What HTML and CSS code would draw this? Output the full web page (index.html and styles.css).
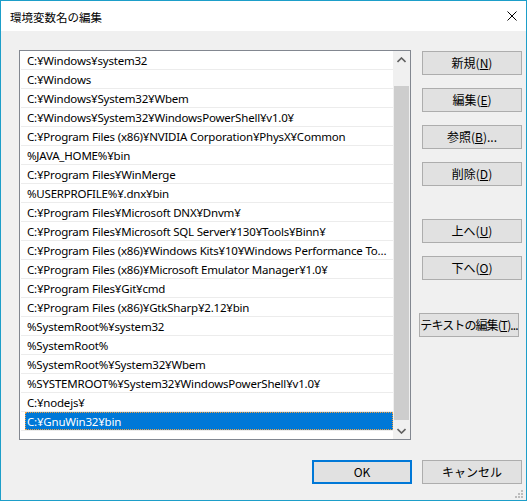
FILE: index.html
```html
<!DOCTYPE html>
<html>
<head>
  <meta charset="utf-8">
  <title>環境変数名の編集</title>
  <link rel="stylesheet" href="styles.css">
</head>
<body>
  <div class="window">
    <div class="titlebar">
      <span class="title">環境変数名の編集</span>
      <svg class="close" width="10" height="10" viewBox="0 0 10 10">
        <path d="M0.5 0.5 L9.5 9.5 M9.5 0.5 L0.5 9.5" stroke="#000" stroke-width="1" fill="none"/>
      </svg>
    </div>

    <div class="content">
      <div class="main">
        <div class="listbox">
          <div class="rows">
            <div class="row"><div class="cell">C:¥Windows¥system32</div></div>
            <div class="row"><div class="cell">C:¥Windows</div></div>
            <div class="row"><div class="cell">C:¥Windows¥System32¥Wbem</div></div>
            <div class="row"><div class="cell">C:¥Windows¥System32¥WindowsPowerShell¥v1.0¥</div></div>
            <div class="row"><div class="cell">C:¥Program Files (x86)¥NVIDIA Corporation¥PhysX¥Common</div></div>
            <div class="row"><div class="cell">%JAVA_HOME%¥bin</div></div>
            <div class="row"><div class="cell">C:¥Program Files¥WinMerge</div></div>
            <div class="row"><div class="cell">%USERPROFILE%¥.dnx¥bin</div></div>
            <div class="row"><div class="cell">C:¥Program Files¥Microsoft DNX¥Dnvm¥</div></div>
            <div class="row"><div class="cell">C:¥Program Files¥Microsoft SQL Server¥130¥Tools¥Binn¥</div></div>
            <div class="row"><div class="cell">C:¥Program Files (x86)¥Windows Kits¥10¥Windows Performance Toolkit¥</div></div>
            <div class="row"><div class="cell">C:¥Program Files (x86)¥Microsoft Emulator Manager¥1.0¥</div></div>
            <div class="row"><div class="cell">C:¥Program Files¥Git¥cmd</div></div>
            <div class="row"><div class="cell">C:¥Program Files (x86)¥GtkSharp¥2.12¥bin</div></div>
            <div class="row"><div class="cell">%SystemRoot%¥system32</div></div>
            <div class="row"><div class="cell">%SystemRoot%</div></div>
            <div class="row"><div class="cell">%SystemRoot%¥System32¥Wbem</div></div>
            <div class="row"><div class="cell">%SYSTEMROOT%¥System32¥WindowsPowerShell¥v1.0¥</div></div>
            <div class="row"><div class="cell">C:¥nodejs¥</div></div>
            <div class="row selected"><div class="cell">C:¥GnuWin32¥bin</div></div>
          </div>
          <div class="scrollbar">
            <div class="arrow">
              <svg width="9" height="6" viewBox="0 0 9 6"><path d="M0.5 5 L4.5 1 L8.5 5" stroke="#606060" stroke-width="1.6" fill="none"/></svg>
            </div>
            <div class="track"><div class="thumb"></div></div>
            <div class="arrow">
              <svg width="9" height="6" viewBox="0 0 9 6"><path d="M0.5 1 L4.5 5 L8.5 1" stroke="#606060" stroke-width="1.6" fill="none"/></svg>
            </div>
          </div>
        </div>

        <div class="side">
          <button class="btn">新規(<u>N</u>)</button>
          <button class="btn">編集(<u>E</u>)</button>
          <button class="btn">参照(<u>B</u>)...</button>
          <button class="btn">削除(<u>D</u>)</button>
          <button class="btn group">上へ(<u>U</u>)</button>
          <button class="btn">下へ(<u>O</u>)</button>
          <button class="btn group shift">テキストの編集(<u>T</u>)...</button>
        </div>
      </div>

      <div class="footer">
        <button class="btn default">OK</button>
        <button class="btn">キャンセル</button>
      </div>

      <svg class="grip" width="9" height="9" viewBox="0 0 9 9" fill="#bcbcbc">
        <rect x="7" y="1" width="2" height="2"/>
        <rect x="4" y="4" width="2" height="2"/>
        <rect x="7" y="4" width="2" height="2"/>
        <rect x="1" y="7" width="2" height="2"/>
        <rect x="4" y="7" width="2" height="2"/>
        <rect x="7" y="7" width="2" height="2"/>
      </svg>
    </div>
  </div>
</body>
</html>
```

FILE: styles.css
```css
html, body {
  margin: 0;
  padding: 0;
}
body {
  width: 527px;
  height: 501px;
  font-family: "Noto Sans", "Noto Sans CJK JP", sans-serif;
  font-size: 12px;
  color: #000;
  background-color: #fff;
}
.window {
  width: 527px;
  height: 501px;
  box-sizing: border-box;
  border: 1px solid #1d9ec9;
  display: flex;
  flex-direction: column;
}
.titlebar {
  height: 30px;
  flex-shrink: 0;
  background-color: #fff;
  display: flex;
  align-items: center;
  justify-content: space-between;
  padding: 0 9px 0 9px;
}
.title {
  font-family: "Noto Sans CJK JP", sans-serif;
  font-size: 11.5px;
  margin-top: 1px;
}
.content {
  flex: 1;
  background-color: #f0f0f0;
  padding: 19px 4px 0 18px;
  position: relative;
}
.main {
  display: flex;
  gap: 11px;
}

/* list view */
.listbox {
  width: 392px;
  height: 390px;
  box-sizing: border-box;
  border: 1px solid #828790;
  background-color: #fff;
  display: flex;
}
.rows {
  flex: 1;
  min-width: 0;
}
.row {
  height: 18px;
  margin-left: 1px;
  border-bottom: 1px solid #ececec;
  display: flex;
}
.cell {
  flex: 1;
  min-width: 0;
  margin-left: 4px;
  padding: 2px 2px 0 2px;
  font-size: 11.5px;
  letter-spacing: -0.2px;
  line-height: 16px;
  white-space: nowrap;
  overflow: hidden;
  text-overflow: ellipsis;
  box-sizing: border-box;
}
.row.selected .cell {
  background-color: #0078d7;
  color: #fff;
  outline: 1px dotted #f0a040;
  outline-offset: -1px;
}
.scrollbar {
  width: 17px;
  flex-shrink: 0;
  background-color: #f0f0f0;
  display: flex;
  flex-direction: column;
}
.arrow {
  height: 17px;
  display: flex;
  align-items: center;
  justify-content: center;
}
.track {
  flex: 1;
  display: flex;
  flex-direction: column;
  justify-content: flex-end;
  padding: 0 1px 2px 1px;
}
.thumb {
  height: 334px;
  background-color: #cdcdcd;
}

/* buttons */
.side {
  display: flex;
  flex-direction: column;
  gap: 13px;
  padding-top: 1px;
}
.btn {
  width: 100px;
  height: 24px;
  box-sizing: border-box;
  border: 1px solid #adadad;
  background-color: #e1e1e1;
  font-family: "Noto Sans CJK JP", "Noto Sans", sans-serif;
  font-size: 12px;
  color: #000;
  padding: 0;
  line-height: 20px;
  white-space: nowrap;
}
.btn u {
  text-underline-offset: 1px;
}
.btn.group {
  margin-top: 20px;
}
.btn.shift {
  margin-left: -3px;
  letter-spacing: -0.9px;
}
.btn.default {
  border: 2px solid #0078d7;
}
.footer {
  display: flex;
  justify-content: flex-end;
  gap: 10px;
  margin-top: 20px;
}
.grip {
  position: absolute;
  right: 3px;
  bottom: 2px;
}
```
